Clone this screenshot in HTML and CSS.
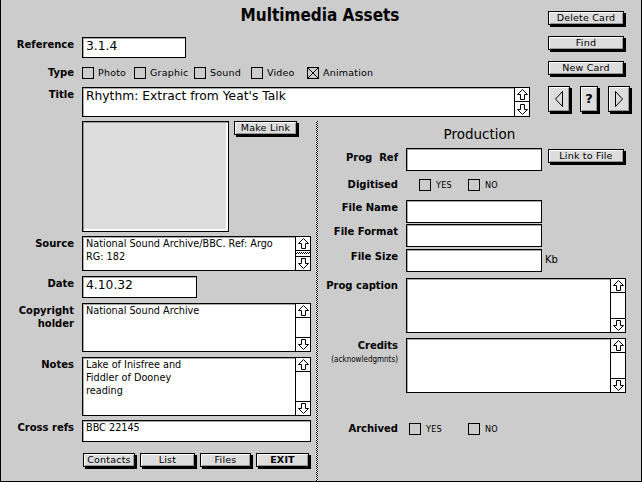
FILE: index.html
```html
<!doctype html>
<html>
<head>
<meta charset="utf-8">
<title>Multimedia Assets</title>
<link rel="stylesheet" href="styles.css">
</head>
<body>
<svg class="defs" width="0" height="0">
  <symbol id="arrow-up" viewBox="0 0 11 11"><path d="M5.5 .5 10.5 5.5H7.5V10.5H3.5V5.5H.5Z" fill="#fff" stroke="#000"/></symbol>
  <symbol id="arrow-down" viewBox="0 0 11 11"><path d="M5.5 10.5 10.5 5.5H7.5V.5H3.5V5.5H.5Z" fill="#fff" stroke="#000"/></symbol>
  <symbol id="box" viewBox="0 0 12 12"><rect x=".5" y=".5" width="11" height="11" fill="none" stroke="#000"/></symbol>
  <symbol id="box-x" viewBox="0 0 12 12"><rect x=".5" y=".5" width="11" height="11" fill="none" stroke="#000"/><path d="M1 1 11 11M11 1 1 11" stroke="#000"/></symbol>
</svg>

<div class="card">
  <div class="top">
    <div class="top-main">
      <h1 class="heading">Multimedia Assets</h1>

      <div class="row row-ref">
        <div class="lbl">Reference</div>
        <div class="field big w-ref">3.1.4</div>
      </div>

      <div class="row checks-row row-type">
        <div class="lbl">Type</div>
        <div class="checks type-checks">
          <span class="check"><svg class="cb"><use href="#box"/></svg>Photo</span>
          <span class="check"><svg class="cb"><use href="#box"/></svg>Graphic</span>
          <span class="check"><svg class="cb"><use href="#box"/></svg>Sound</span>
          <span class="check"><svg class="cb"><use href="#box"/></svg>Video</span>
          <span class="check"><svg class="cb"><use href="#box-x"/></svg>Animation</span>
        </div>
      </div>

      <div class="row row-title">
        <div class="lbl">Title</div>
        <div class="field big scrolled w-title">
          <div class="text">Rhythm: Extract from Yeat's Talk</div>
          <div class="scroll">
            <div class="up"><svg class="arr"><use href="#arrow-up"/></svg></div>
            <div class="down"><svg class="arr"><use href="#arrow-down"/></svg></div>
          </div>
        </div>
      </div>
    </div>

    <div class="top-side">
      <button class="btn side-btn">Delete Card</button>
      <button class="btn side-btn">Find</button>
      <button class="btn side-btn">New Card</button>
      <div class="nav">
        <button class="btn nav-btn nav-wide">
          <svg width="10" height="18"><path d="M8.5 1.5 1.5 9 8.5 16.5Z" fill="none" stroke="#000"/></svg>
        </button>
        <button class="btn nav-btn nav-help">?</button>
        <button class="btn nav-btn nav-wide">
          <svg width="10" height="18"><path d="M1.5 1.5 8.5 9 1.5 16.5Z" fill="none" stroke="#000"/></svg>
        </button>
      </div>
    </div>
  </div>

  <div class="bottom">
    <div class="col-left">
      <div class="row">
        <div class="lbl"></div>
        <div class="picture"></div>
        <button class="btn make-link">Make Link</button>
      </div>

      <div class="row row-source">
        <div class="lbl">Source</div>
        <div class="field small scrolled w-wide h-source">
          <div class="text">National Sound Archive/BBC. Ref: Argo<br>RG: 182</div>
          <div class="scroll">
            <div class="up"><svg class="arr"><use href="#arrow-up"/></svg></div>
            <div class="thumb"></div>
            <div class="down"><svg class="arr"><use href="#arrow-down"/></svg></div>
          </div>
        </div>
      </div>

      <div class="row row-gap5">
        <div class="lbl">Date</div>
        <div class="field big w-date">4.10.32</div>
      </div>

      <div class="row row-gap5">
        <div class="lbl">Copyright<br>holder</div>
        <div class="field small scrolled w-wide h-copy">
          <div class="text">National Sound Archive</div>
          <div class="scroll">
            <div class="up"><svg class="arr"><use href="#arrow-up"/></svg></div>
            <div class="down"><svg class="arr"><use href="#arrow-down"/></svg></div>
          </div>
        </div>
      </div>

      <div class="row row-gap5">
        <div class="lbl">Notes</div>
        <div class="field small scrolled w-wide h-notes">
          <div class="text">Lake of Inisfree and<br>Fiddler of Dooney<br>reading</div>
          <div class="scroll">
            <div class="up"><svg class="arr"><use href="#arrow-up"/></svg></div>
            <div class="down"><svg class="arr"><use href="#arrow-down"/></svg></div>
          </div>
        </div>
      </div>

      <div class="row row-gap4">
        <div class="lbl">Cross refs</div>
        <div class="field small w-wide h-cross">BBC 22145</div>
      </div>

      <div class="btn-row">
        <button class="btn w-contacts">Contacts</button>
        <button class="btn w-list">List</button>
        <button class="btn w-files">Files</button>
        <button class="btn w-exit exit">EXIT</button>
      </div>
    </div>

    <div class="divider"></div>

    <div class="col-right">
      <h2 class="section">Production</h2>

      <div class="row row-prog">
        <div class="lbl lbl-r prog-ref">Prog  Ref</div>
        <div class="field big w-short"></div>
        <button class="btn link-file">Link to File</button>
      </div>

      <div class="row checks-row row-digi">
        <div class="lbl lbl-r">Digitised</div>
        <div class="checks yn-checks digi">
          <span class="check yn"><svg class="cb"><use href="#box"/></svg>YES</span>
          <span class="check yn"><svg class="cb"><use href="#box"/></svg>NO</span>
        </div>
      </div>

      <div class="row row-fname">
        <div class="lbl lbl-r">File Name</div>
        <div class="field w-short"></div>
      </div>
      <div class="row row-gap1">
        <div class="lbl lbl-r">File Format</div>
        <div class="field w-short"></div>
      </div>
      <div class="row row-gap2">
        <div class="lbl lbl-r">File Size</div>
        <div class="field w-short"></div>
        <span class="unit">Kb</span>
      </div>

      <div class="row row-caption">
        <div class="lbl lbl-r">Prog caption</div>
        <div class="field scrolled w-cap">
          <div class="text"></div>
          <div class="scroll">
            <div class="up"><svg class="arr"><use href="#arrow-up"/></svg></div>
            <div class="down"><svg class="arr"><use href="#arrow-down"/></svg></div>
          </div>
        </div>
      </div>

      <div class="row row-gap5">
        <div class="lbl lbl-r">Credits<br><span class="sub">(acknowledgmnts)</span></div>
        <div class="field scrolled w-cap">
          <div class="text"></div>
          <div class="scroll">
            <div class="up"><svg class="arr"><use href="#arrow-up"/></svg></div>
            <div class="down"><svg class="arr"><use href="#arrow-down"/></svg></div>
          </div>
        </div>
      </div>

      <div class="row checks-row row-arch">
        <div class="lbl lbl-r">Archived</div>
        <div class="checks yn-checks arch">
          <span class="check yn"><svg class="cb"><use href="#box"/></svg>YES</span>
          <span class="check yn"><svg class="cb"><use href="#box"/></svg>NO</span>
        </div>
      </div>
    </div>
  </div>
</div>
</body>
</html>
```

FILE: styles.css
```css
* {
    box-sizing: border-box;
}
body {
    margin: 0;
    background: #cccccc;
}
.defs {
    position: absolute;
    width: 0;
    height: 0;
}
.card {
    width: 642px;
    height: 482px;
    background: #cccccc;
    border: 1px solid #000;
    border-top: 0;
    font-family: "DejaVu Sans", sans-serif;
    color: #000;
}

/* top strip: title, reference, type and card buttons */
.top {
    display: flex;
    height: 121px;
}
.top-main {
    width: 540px;
}
.heading {
    margin: 0;
    padding: 4px 0 0 98px;
    text-align: center;
    font: bold 17px/22px "DejaVu Sans Condensed", "DejaVu Sans", sans-serif;
}
.top-side {
    padding: 11px 0 0 7px;
}

/* label + field rows */
.row {
    display: flex;
    align-items: flex-start;
}
.lbl {
    flex: none;
    width: 73px;
    margin-right: 8px;
    padding-top: 1px;
    text-align: right;
    font: bold 10px/13px "DejaVu Sans", sans-serif;
}
.lbl-r {
    width: 80px;
}
.prog-ref {
    white-space: pre;
    padding-top: 3px;
}
.sub {
    font: 8px/11px "DejaVu Sans Condensed", sans-serif;
}
.checks-row {
    align-items: center;
}
.checks-row .lbl {
    padding-top: 0;
}
.row-ref { margin-top: 11px; }
.row-type { margin-top: 8px; }
.row-title { margin-top: 8px; }
.row-source { margin-top: 4px; }
.row-gap1 { margin-top: 1px; }
.row-gap2 { margin-top: 2px; }
.row-gap4 { margin-top: 4px; }
.row-gap5 { margin-top: 5px; }

/* text fields */
.field {
    flex: none;
    background: #fff;
    border: 1px solid #000;
    box-shadow: inset 1px 1px 0 #a8a8a8;
    height: 23px;
}
.big {
    font: 12.3px/15px "DejaVu Sans", sans-serif;
    padding: 1px 3px;
}
.small {
    font: 9.7px/13px "DejaVu Sans", sans-serif;
    padding: 0 3px;
}
.scrolled {
    display: flex;
    padding: 0;
}
.scrolled .text {
    flex: 1;
    padding: 1px 3px;
}
.small.scrolled .text {
    padding: 0 3px;
}
.w-ref { width: 104px; height: 21px; }
.w-title { width: 448px; height: 30px; }
.w-wide { width: 229px; }
.w-date { width: 115px; height: 22px; }
.w-short { width: 136px; }
.w-cap { width: 220px; height: 55px; }
.h-source { height: 35px; }
.h-copy { height: 49px; }
.h-notes { height: 59px; }
.h-cross { height: 22px; }

.scroll {
    flex: none;
    width: 15px;
    border-left: 1px solid #000;
    background: #fff;
    display: flex;
    flex-direction: column;
    justify-content: space-between;
}
.scroll .up,
.scroll .down {
    height: 14px;
    display: flex;
    align-items: center;
    justify-content: center;
}
.scroll .up {
    border-bottom: 1px solid #000;
}
.h-copy .down,
.h-notes .down,
.w-cap .down,
.h-source .down {
    border-top: 1px solid #000;
}
.scroll .thumb {
    flex: 1;
    background: repeating-conic-gradient(#000 0 25%, #fff 0 50%) 0 1px / 2px 2px;
    background-repeat: repeat-x;
}
.arr {
    width: 11px;
    height: 11px;
    display: block;
}

/* check boxes */
.checks {
    display: grid;
    font: 9.5px/12px "DejaVu Sans", sans-serif;
    letter-spacing: 0.2px;
}
.type-checks {
    grid-template-columns: 52px 60px 57px 56px auto;
}
.check {
    display: flex;
    align-items: center;
    white-space: nowrap;
}
.cb {
    width: 12px;
    height: 12px;
    margin-right: 4px;
    flex: none;
}
.yn {
    font: 9px/12px "DejaVu Sans Condensed", sans-serif;
}
.yn .cb {
    margin-right: 5px;
}
.digi {
    margin-left: 13px;
    grid-template-columns: 49px auto;
}
.arch {
    margin-left: 3px;
    grid-template-columns: 59px auto;
}

/* buttons */
.btn {
    display: block;
    margin: 0;
    padding: 0;
    height: 14px;
    border: 1px solid #000;
    border-radius: 0;
    background: #dddddd;
    box-shadow: inset 1px 1px 0 #fff, inset -1px -1px 0 #999, 2px 2px 0 #000;
    font: 9.5px/12px "DejaVu Sans", sans-serif;
    letter-spacing: 0.2px;
    color: #000;
    text-align: center;
}
.side-btn {
    width: 76px;
    margin-bottom: 11px;
}
.nav {
    display: flex;
    gap: 10px;
    margin-top: 1px;
}
.nav-btn {
    height: 26px;
    display: flex;
    align-items: center;
    justify-content: center;
}
.nav-wide {
    width: 22px;
}
.nav-help {
    width: 18px;
    font: bold 13px/16px "DejaVu Sans", sans-serif;
}
.make-link {
    width: 63px;
    margin-left: 5px;
}
.link-file {
    width: 76px;
    margin: 1px 0 0 6px;
}
.btn-row {
    display: flex;
    gap: 5px;
    margin: 11px 0 0 82px;
}
.w-contacts { width: 52px; }
.w-list { width: 55px; }
.w-files { width: 51px; }
.w-exit { width: 53px; }
.exit {
    font-weight: bold;
}

/* lower half */
.bottom {
    display: flex;
    height: 360px;
}
.col-left {
    width: 315px;
}
.picture {
    flex: none;
    width: 147px;
    height: 111px;
    background: #dddddd;
    border: 1px solid #000;
    box-shadow: inset 1px 1px 0 #999, inset -2px -2px 0 #fff;
}
.divider {
    width: 2px;
    background: repeating-conic-gradient(#000 0 25%, #fff 0 50%) 0 0 / 2px 2px;
}
.col-right {
    flex: 1;
}
.section {
    margin: 5px 0 0;
    text-align: center;
    font: 13.5px/16px "DejaVu Sans", sans-serif;
}
.row-prog { margin-top: 6px; }
.row-digi { margin-top: 7px; }
.row-fname { margin-top: 9px; }
.row-caption { margin-top: 6px; }
.row-arch { margin-top: 29px; }
.unit {
    margin-left: 3px;
    padding-top: 4px;
    font: 10px/13px "DejaVu Sans", sans-serif;
}
```
